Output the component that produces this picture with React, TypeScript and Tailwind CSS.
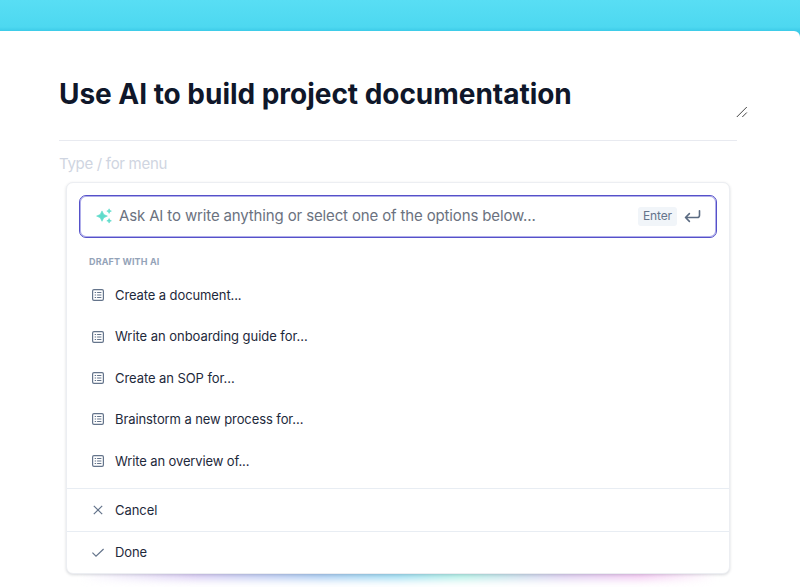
const drafts = [
  { label: "Create a document...", className: "tracking-[-0.1px]" },
  { label: "Write an onboarding guide for...", className: "tracking-[-0.04px]" },
  { label: "Create an SOP for...", className: "tracking-[-0.07px]" },
  { label: "Brainstorm a new process for...", className: "tracking-[-0.09px]" },
  { label: "Write an overview of...", className: "tracking-[-0.12px]" },
];

function ListIcon() {
  return (
    <svg width="12" height="12" viewBox="0 0 12 12" fill="none" stroke="#64748b" className="mb-px shrink-0">
      <rect x="0.6" y="0.6" width="10.8" height="10.8" rx="1.4" strokeWidth="1.2" />
      <path d="M2.7 3.5h1.4M2.7 6h1.4M2.7 8.5h1.4M5.1 3.5h4.3M5.1 6h4.3M5.1 8.5h4.3" strokeWidth="1" />
    </svg>
  );
}

function SparkleIcon() {
  return (
    <svg width="16" height="16" viewBox="0 0 16 16" fill="#5fdccb" stroke="#5fdccb" strokeWidth="0.6" strokeLinejoin="round" className="mb-px shrink-0">
      <path d="M6 2.9 7.8 6.5 11.4 8.1 7.8 9.7 6 13.3 4.2 9.7 0.6 8.1 4.2 6.5Z" />
      <path d="M13.1 0.8 13.8 2.4 15.4 3.1 13.8 3.8 13.1 5.4 12.4 3.8 10.8 3.1 12.4 2.4Z" />
      <path d="M13.1 10.5 13.8 12.1 15.4 12.8 13.8 13.5 13.1 15.1 12.4 13.5 10.8 12.8 12.4 12.1Z" />
    </svg>
  );
}

export default function App() {
  return (
    <main className="h-[587px] overflow-hidden bg-linear-to-b from-[#58def4] from-0% via-[#4dd8f0] via-[27px] to-[#3ccbe8] to-[31px] pt-[31px] font-['Inter',sans-serif]">
      <div className="h-[556px] rounded-tr-[6px] bg-white pl-[59px]">
        {/* Title */}
        <header className="flex h-[110px] w-[678px] items-start border-b border-[#e8eaf0] pt-[43px]">
          <h1 className="w-[678px] shrink-0 text-[28px] leading-[40px] font-bold tracking-[-0.03px] whitespace-nowrap text-[#0f172a]">
            Use AI to build project documentation
          </h1>
          <svg width="12" height="12" viewBox="0 0 12 12" fill="none" stroke="#444" className="mt-[32px] -ml-px shrink-0">
            <path d="M0.8 11 10.8 1M6.3 11 10.8 6.5" />
          </svg>
        </header>
        <p className="h-[41px] pt-[12.5px] text-[15px] leading-[20px] tracking-[-0.3px] text-[#cfd5e1]">
          Type / for menu
        </p>

        {/* AI menu */}
        <div className="relative ml-[7px] h-[392px] w-[664px]">
          <div className="absolute inset-x-[14px] bottom-0 h-[12px] translate-y-[5px] bg-[linear-gradient(90deg,transparent,#d5c6f2_18%,#9ec5f0_38%,#90d8f0_50%,#a8eee2_60%,#d8c8ee_76%,#f2c2f0_88%,transparent)] blur-[4px]" />
          <div className="relative flex h-full flex-col rounded-[7px] border border-[#eceef2] bg-white shadow-[0_1px_3px_rgba(15,23,42,0.16)]">
            <div className="mx-[12px] mt-[12px] flex h-[43px] items-center rounded-[7px] border border-[#5551c9] pr-[15px] pl-[16px] shadow-[inset_0_0_0_1px_#b0aeea]">
              <SparkleIcon />
              <span className="ml-[7px] text-[15px] tracking-[-0.14px] whitespace-nowrap text-[#6b7280]">
                Ask AI to write anything or select one of the options below...
              </span>
              <span className="mb-px ml-auto flex h-[19px] w-[39px] items-center justify-center rounded-[3px] bg-[#f1f5f9] text-[12px] tracking-[-0.15px] text-[#64748b]">
                Enter
              </span>
              <svg width="17" height="14" viewBox="0 0 17 14" fill="none" stroke="#5b6b82" strokeWidth="1.6" strokeLinecap="round" strokeLinejoin="round" className="ml-[7px]">
                <path d="M15.5 0.8v4.4q0 2.3-2.3 2.3H1.5M5.4 3.6 1.5 7.5l3.9 3.9" />
              </svg>
            </div>
            <h2 className="mt-[16px] ml-[22px] text-[9px] leading-[15px] font-bold tracking-[0.15px] text-[#94a3b8]">
              DRAFT WITH AI
            </h2>
            <ul className="mt-[6px] h-[213px]">
              {drafts.map((draft) => (
                <li key={draft.label} className="flex h-[41.4px] items-center gap-[11px] pl-[25px] text-[13px] text-[#1e293b]">
                  <ListIcon />
                  <span className={draft.className}>{draft.label}</span>
                </li>
              ))}
            </ul>
            <div className="flex h-[43px] shrink-0 items-center gap-[11px] border-t border-[#e8edf3] pl-[25px] text-[13px] text-[#1e293b]">
              <svg width="12" height="12" viewBox="0 0 12 12" fill="none" stroke="#64748b" strokeWidth="1.2">
                <path d="m1.8 1.8 8.4 8.4M10.2 1.8l-8.4 8.4" />
              </svg>
              <span className="mt-px tracking-[-0.05px]">Cancel</span>
            </div>
            <div className="flex h-[42px] shrink-0 items-center gap-[11px] border-t border-[#e8edf3] pl-[25px] text-[13px] text-[#1e293b]">
              <svg width="12" height="12" viewBox="0 0 12 12" fill="none" stroke="#64748b" strokeWidth="1.2">
                <path d="m0.4 5.6 3.6 3.6 7.6-7.2" />
              </svg>
              <span className="mt-px tracking-[-0.1px]">Done</span>
            </div>
          </div>
        </div>
      </div>
    </main>
  );
}
